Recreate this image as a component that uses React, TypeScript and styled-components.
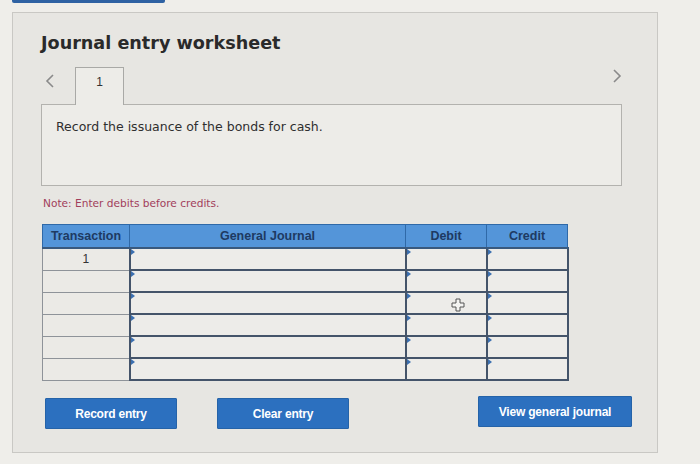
import React from "react";
import styled, { createGlobalStyle } from "styled-components";

const GlobalStyle = createGlobalStyle`
  html, body {
    margin: 0;
    padding: 0;
    background: #efeeea;
  }
  body {
    font-family: "DejaVu Sans", Verdana, sans-serif;
    color: #333;
  }
`;

const Page = styled.div`
  width: 700px;
  height: 464px;
  overflow: hidden;
`;

const TopStrip = styled.div`
  margin-left: 12px;
  width: 153px;
  height: 3px;
  background: #2f62a3;
  border-radius: 0 0 2px 2px;
`;

const Panel = styled.section`
  box-sizing: border-box;
  width: 646px;
  margin: 9px 0 0 12px;
  padding: 19px 25px 23px 28px;
  border: 1px solid #c9c8c4;
  background: #e7e6e2;
`;

const Title = styled.h1`
  margin: 0;
  font-size: 17.6px;
  line-height: 22px;
  font-weight: bold;
  color: #2a2a2a;
`;

const TabRow = styled.div`
  width: 581px;
  margin-top: 14px;
  display: flex;
  align-items: flex-start;
  height: 37px;
`;

const Arrow = styled.button<{ $side: "left" | "right"; $top: number }>`
  border: 0;
  background: none;
  padding: 0;
  width: 34px;
  height: 16px;
  margin-top: ${(p) => p.$top}px;
  display: flex;
  align-items: center;
  justify-content: ${(p) => (p.$side === "left" ? "flex-start" : "flex-end")};
  padding-left: ${(p) => (p.$side === "left" ? 4 : 0)}px;
  margin-left: ${(p) => (p.$side === "right" ? "auto" : "0")};
`;

const Tab = styled.div`
  box-sizing: border-box;
  width: 49px;
  height: 38px;
  margin-top: -1px;
  border: 1px solid #a9a9a6;
  border-bottom: 0;
  background: #edece8;
  position: relative;
  z-index: 1;
  text-align: center;
  padding-top: 7px;
  font-family: "Liberation Sans", Arial, sans-serif;
  font-size: 12px;
  color: #333;
`;

const Prompt = styled.div`
  box-sizing: border-box;
  width: 581px;
  height: 82px;
  margin-top: -1px;
  border: 1px solid #b3b2ae;
  background: #edece8;
  padding: 14px 14px;
  font-size: 12.5px;
  line-height: 16px;
  color: #2f2f2f;
`;

const Note = styled.p`
  margin: 10px 0 0 2px;
  font-size: 10.6px;
  line-height: 14px;
  color: #a23e5b;
`;

const Table = styled.table`
  margin: 14px 0 0 1px;
  border-collapse: collapse;
  table-layout: fixed;
  width: 521px;
  font-family: "Liberation Sans", Arial, sans-serif;
`;

const Th = styled.th<{ $w: number }>`
  width: ${(p) => p.$w}px;
  height: 22px;
  padding: 0;
  background: #5495d9;
  color: #1e3a62;
  font-size: 12.5px;
  font-weight: bold;
  text-align: center;
  border: 1px solid #2f69a8;
  border-bottom: 2px solid #39597e;
`;

const TxCell = styled.td`
  height: 20px;
  padding: 0;
  border: 1px solid #8e9399;
  background: #ebeae6;
  color: #333;
  font-size: 12px;
  text-align: center;
  vertical-align: middle;
`;

const InputCell = styled.td`
  position: relative;
  height: 20px;
  padding: 0;
  border: 2px solid #44546a;
  background: #edece9;

  &::before {
    content: "";
    position: absolute;
    left: 0;
    top: 0;
    border-top: 3px solid transparent;
    border-bottom: 3px solid transparent;
    border-left: 4px solid #3b6fb0;
  }
`;

const Cursor = styled.svg`
  position: absolute;
  left: 44px;
  top: 5px;
`;

const ButtonRow = styled.div`
  display: flex;
  align-items: flex-start;
  gap: 40px;
  margin: 17px 0 0 4px;
`;

const ActionButton = styled.button<{ $w: number }>`
  width: ${(p) => p.$w}px;
  height: 31px;
  border: 1px solid #2563a8;
  border-radius: 1px;
  background: #2c70bf;
  color: #fff;
  font-family: "Liberation Sans", Arial, sans-serif;
  font-size: 12px;
  font-weight: bold;
  letter-spacing: -0.2px;
  &:last-child {
    margin-left: auto;
    margin-top: -2px;
  }
`;

const rows = [1, 2, 3, 4, 5, 6];

export default function App() {
  return (
    <Page>
      <GlobalStyle />
      <TopStrip />
      <Panel>
        <Title>Journal entry worksheet</Title>
        <TabRow>
          <Arrow $side="left" $top={5} aria-label="previous">
            <svg width="10" height="16" viewBox="0 0 10 16">
              <polyline points="8,2 2,8 8,14" fill="none" stroke="#8a8a8a" strokeWidth="1.6" />
            </svg>
          </Arrow>
          <Tab>1</Tab>
          <Arrow $side="right" $top={0} aria-label="next">
            <svg width="10" height="16" viewBox="0 0 10 16">
              <polyline points="2,2 8,8 2,14" fill="none" stroke="#8a8a8a" strokeWidth="1.6" />
            </svg>
          </Arrow>
        </TabRow>
        <Prompt>Record the issuance of the bonds for cash.</Prompt>
        <Note>Note: Enter debits before credits.</Note>
        <Table>
          <thead>
            <tr>
              <Th $w={86}>Transaction</Th>
              <Th $w={275}>General Journal</Th>
              <Th $w={80}>Debit</Th>
              <Th $w={80}>Credit</Th>
            </tr>
          </thead>
          <tbody>
            {rows.map((r) => (
              <tr key={r}>
                <TxCell>{r === 1 ? "1" : ""}</TxCell>
                <InputCell />
                <InputCell>
                  {r === 3 && (
                    <Cursor width="14" height="14" viewBox="0 0 14 14">
                      <path
                        d="M5 1h4v4h4v4H9v4H5V9H1V5h4z"
                        fill="#f4f4f2"
                        stroke="#555"
                        strokeWidth="1"
                      />
                    </Cursor>
                  )}
                </InputCell>
                <InputCell />
              </tr>
            ))}
          </tbody>
        </Table>
        <ButtonRow>
          <ActionButton $w={132}>Record entry</ActionButton>
          <ActionButton $w={132}>Clear entry</ActionButton>
          <ActionButton $w={154}>View general journal</ActionButton>
        </ButtonRow>
      </Panel>
    </Page>
  );
}
